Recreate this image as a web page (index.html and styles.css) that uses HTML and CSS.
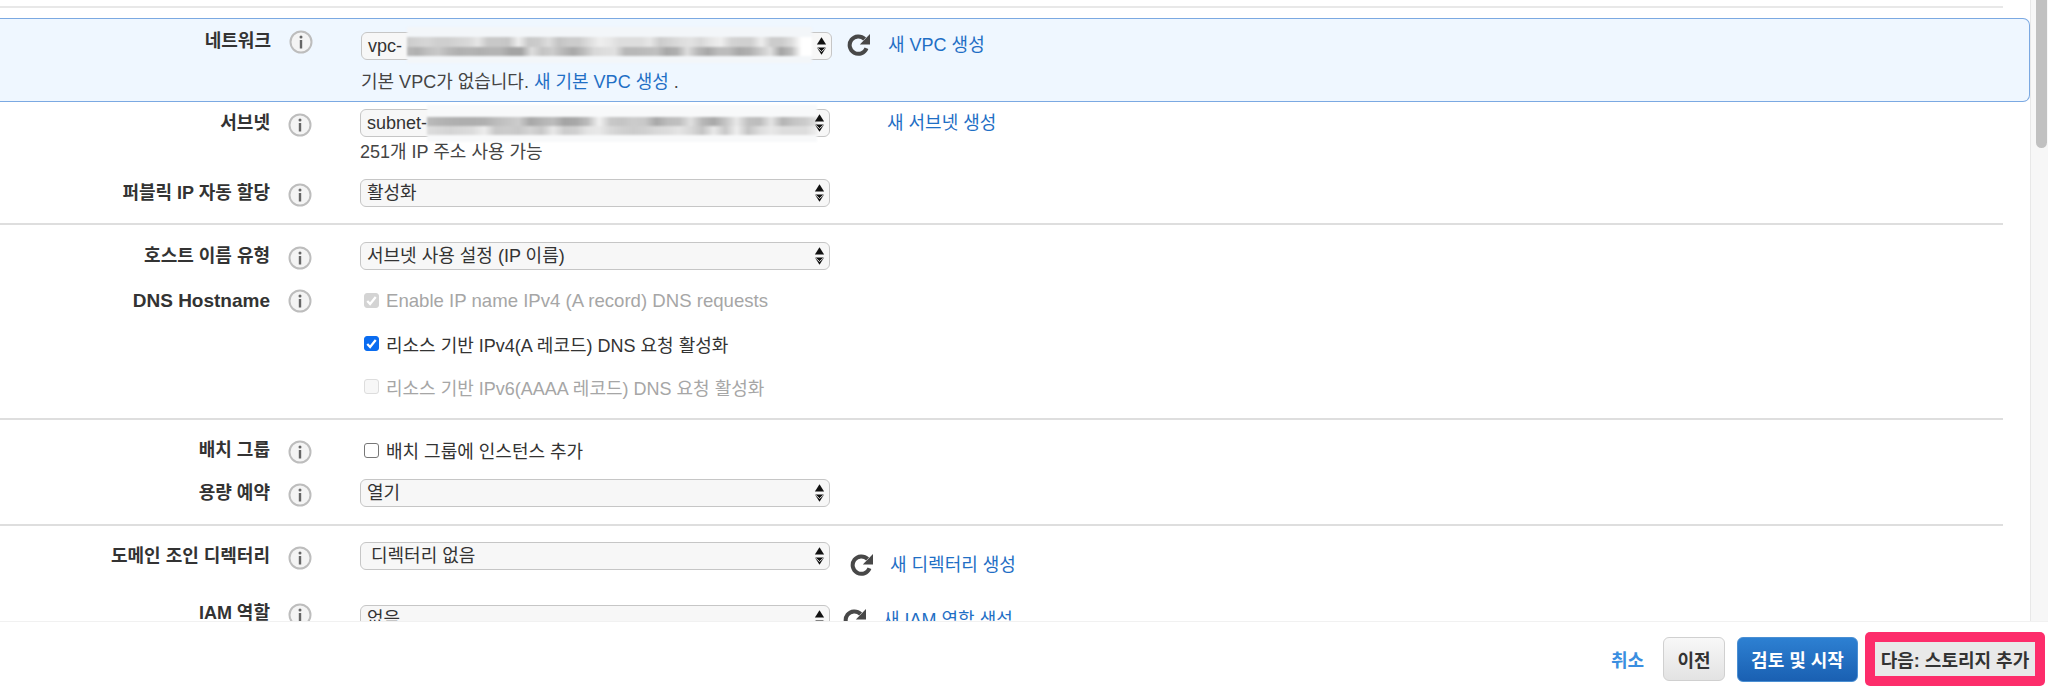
FILE: index.html
```html
<!DOCTYPE html>
<html lang="ko">
<head>
    <meta charset="UTF-8">
    <title>인스턴스 세부 정보 구성</title>
    <link rel="stylesheet" href="styles.css">
</head>
<body>

    <svg class="defs" width="0" height="0">
        <symbol id="icon-info" viewBox="0 0 24 24">
            <circle cx="12" cy="12" r="10.5" fill="#f4f4f4" stroke="#bdbdbd" stroke-width="2"/>
            <circle cx="12" cy="7" r="1.5" fill="#666"/>
            <rect x="10.8" y="10" width="2.4" height="8.5" fill="#666"/>
        </symbol>
        <symbol id="icon-refresh" viewBox="0 0 24 24">
            <path d="M19.5 15.2A8.7 8.7 0 1 1 17.6 6" fill="none" stroke="#484848" stroke-width="4"/>
            <path d="M23 1v10.4H12.8z" fill="#484848"/>
        </symbol>
        <symbol id="icon-arrows" viewBox="0 0 10 16">
            <path d="M5 0l4.2 6.6H.8z" fill="#111"/>
            <path d="M5 16L.8 9.4h8.4z" fill="#111"/>
            <path d="M1 9.4L5 13l4-3.6" fill="none" stroke="#fff" stroke-width=".8"/>
        </symbol>
        <symbol id="icon-tick" viewBox="0 0 16 16">
            <path d="M3.5 8.5l3 3.2 6-7.5" fill="none" stroke="#fff" stroke-width="2.4"/>
        </symbol>
    </svg>

    <div class="page">
        <div class="main">
            <div class="content">
                <div class="line line-top"></div>

                <div class="row row-active">
                    <div class="label">네트워크</div>
                    <div class="info"><svg><use href="#icon-info"/></svg></div>
                    <div class="field field-shift">
                        <div class="select select-wide">
                            <span>vpc-</span>
                            <div class="redact redact-vpc"></div>
                            <svg class="arrows"><use href="#icon-arrows"/></svg>
                        </div>
                        <div class="hint hint-active">기본 VPC가 없습니다. <a href="#">새 기본 VPC 생성</a> .</div>
                    </div>
                    <div class="side side-vpc">
                        <svg class="refresh"><use href="#icon-refresh"/></svg>
                        <a href="#">새 VPC 생성</a>
                    </div>
                </div>

                <div class="row row-subnet">
                    <div class="label">서브넷</div>
                    <div class="info"><svg><use href="#icon-info"/></svg></div>
                    <div class="field">
                        <div class="select">
                            <span>subnet-</span>
                            <div class="redact redact-subnet"></div>
                            <svg class="arrows"><use href="#icon-arrows"/></svg>
                        </div>
                        <div class="hint">251개 IP 주소 사용 가능</div>
                    </div>
                    <div class="side side-plain"><a href="#">새 서브넷 생성</a></div>
                </div>

                <div class="row row-public">
                    <div class="label">퍼블릭 IP 자동 할당</div>
                    <div class="info"><svg><use href="#icon-info"/></svg></div>
                    <div class="field">
                        <div class="select"><span>활성화</span><svg class="arrows"><use href="#icon-arrows"/></svg></div>
                    </div>
                </div>

                <div class="line line-a"></div>

                <div class="row row-host">
                    <div class="label">호스트 이름 유형</div>
                    <div class="info"><svg><use href="#icon-info"/></svg></div>
                    <div class="field">
                        <div class="select"><span>서브넷 사용 설정 (IP 이름)</span><svg class="arrows"><use href="#icon-arrows"/></svg></div>
                    </div>
                </div>

                <div class="row row-dns">
                    <div class="label label-latin">DNS Hostname</div>
                    <div class="info"><svg><use href="#icon-info"/></svg></div>
                    <div class="field">
                        <div class="check-line check-latin disabled">
                            <span class="check check-grey"><svg><use href="#icon-tick"/></svg></span>
                            Enable IP name IPv4 (A record) DNS requests
                        </div>
                        <div class="check-line">
                            <span class="check check-on"><svg><use href="#icon-tick"/></svg></span>
                            리소스 기반 IPv4(A 레코드) DNS 요청 활성화
                        </div>
                        <div class="check-line disabled">
                            <span class="check check-off"></span>
                            리소스 기반 IPv6(AAAA 레코드) DNS 요청 활성화
                        </div>
                    </div>
                </div>

                <div class="line line-b"></div>

                <div class="row row-placement">
                    <div class="label">배치 그룹</div>
                    <div class="info"><svg><use href="#icon-info"/></svg></div>
                    <div class="field">
                        <div class="check-line check-line-short">
                            <span class="check"></span>
                            배치 그룹에 인스턴스 추가
                        </div>
                    </div>
                </div>

                <div class="row row-capacity">
                    <div class="label">용량 예약</div>
                    <div class="info"><svg><use href="#icon-info"/></svg></div>
                    <div class="field">
                        <div class="select"><span>열기</span><svg class="arrows"><use href="#icon-arrows"/></svg></div>
                    </div>
                </div>

                <div class="line line-c"></div>

                <div class="row row-domain">
                    <div class="label">도메인 조인 디렉터리</div>
                    <div class="info"><svg><use href="#icon-info"/></svg></div>
                    <div class="field">
                        <div class="select select-pad"><span>디렉터리 없음</span><svg class="arrows"><use href="#icon-arrows"/></svg></div>
                    </div>
                    <div class="side side-domain">
                        <svg class="refresh"><use href="#icon-refresh"/></svg>
                        <a href="#">새 디렉터리 생성</a>
                    </div>
                </div>

                <div class="row row-iam">
                    <div class="label">IAM 역할</div>
                    <div class="info"><svg><use href="#icon-info"/></svg></div>
                    <div class="field field-iam">
                        <div class="select"><span>없음</span><svg class="arrows"><use href="#icon-arrows"/></svg></div>
                    </div>
                    <div class="side side-iam">
                        <svg class="refresh"><use href="#icon-refresh"/></svg>
                        <a href="#">새 IAM 역할 생성</a>
                    </div>
                </div>
            </div>

            <div class="scrollbar"><div class="thumb"></div></div>
        </div>

        <div class="footer">
            <a class="cancel" href="#">취소</a>
            <button class="btn btn-prev">이전</button>
            <button class="btn btn-primary">검토 및 시작</button>
            <div class="next-mark"><button class="btn-next">다음: 스토리지 추가</button></div>
        </div>
    </div>

</body>
</html>
```

FILE: styles.css
```css
* {
    box-sizing: border-box;
}
body {
    margin: 0;
    font-family: "Liberation Sans", "Noto Sans CJK KR", sans-serif;
    font-size: 18px;
    color: #444;
    background: #fff;
}
a {
    color: #1f6fc5;
    text-decoration: none;
}
.defs {
    position: absolute;
}
.page {
    display: flex;
    flex-direction: column;
    height: 696px;
    overflow: hidden;
}
.main {
    display: flex;
    height: 621px;
    overflow: hidden;
}
.content {
    flex: 1;
}
.scrollbar {
    width: 18px;
    padding-left: 5px;
    background: #f7f7f7;
    border-left: 1px solid #e8e8e8;
}
.thumb {
    width: 11px;
    height: 148px;
    background: #c1c1c1;
    border-radius: 0 0 6px 6px;
}

.line {
    width: 2003px;
    height: 2px;
    background: #dedede;
}
.line-top {
    margin-top: 6px;
    background: #e8e8e8;
}
.line-a { margin-top: 16px; }
.line-b { margin-top: 10px; }
.line-c { margin-top: 17px; }

.row {
    display: grid;
    grid-template-columns: 270px 90px 472px auto;
    align-items: start;
}
.row-active {
    height: 84px;
    margin-top: 10px;
    padding: 8px 0 0 1px;
    background: #eff7ff;
    border: 1px solid #7ba9e2;
    border-left: none;
    border-radius: 0 7px 7px 0;
}
.row-subnet { margin-top: 7px; }
.row-public { margin-top: 17px; }
.row-host { margin-top: 17px; }
.row-dns { margin-top: 9px; }
.row-placement { margin-top: 16px; }
.row-capacity { margin-top: 15px; }
.row-domain { margin-top: 16px; }
.row-iam { margin-top: 20px; }

.label {
    font-weight: bold;
    line-height: 28px;
    text-align: right;
    color: #333;
}
.row-dns .label {
    line-height: 43px;
}
.label-latin {
    font-size: 19px;
}
.info {
    height: 24px;
    margin: 4px 0 0 18px;
}
.info svg {
    display: block;
    width: 24px;
    height: 24px;
}
.row-active .info {
    margin-top: 3px;
}
.row-dns .info {
    margin-top: 10px;
}

.field-shift {
    padding-top: 5px;
}
.field-iam {
    padding-top: 6px;
}
.select {
    position: relative;
    display: flex;
    align-items: center;
    width: 470px;
    height: 28px;
    padding-left: 6px;
    line-height: 26px;
    color: #333;
    background: #f7f7f7;
    border: 1px solid #c6c6c6;
    border-radius: 6px;
}
.select-wide {
    width: 471px;
}
.select-pad {
    padding-left: 10px;
}
.arrows {
    position: absolute;
    top: 4px;
    right: 4px;
    width: 11px;
    height: 18px;
}
.redact {
    position: absolute;
    filter: blur(1px);
}
.redact-vpc {
    top: -6px;
    left: 45px;
    width: 405px;
    height: 36px;
    background:
        linear-gradient(90deg, #ccc, #d2d2d2, #d6d6d6, #cfcfcf, #cfcfcf, #d4d4d4, #d8d8d8, #e6e6e6, #c8c8c8, #c8c8c8, #c6c6c6, #eee, #c8c8c8, #ccc, #ddd, #c4c4c4, #ccc, #ccc, #ddd, #eee, #e8e8e8, #ddd, #ddd, #ddd, #e6e6e6, #ccc, #d4d4d4, #ddd, #e2e2e2, #d8d8d8, #e6e6e6, #eee, #d4d4d4, #d0d0d0, #d0d0d0, #ededed, #ccc, #ccc, #ddd, #fff, #fff) no-repeat 0 10px / 100% 10px,
        linear-gradient(90deg, #b8b8b8, #b0b0b0, #c0c0c0, #c8c8c8, #b8b8b8, #b0b0b0, #b4b4b4, #b0b0b0, #b4b4b4, #b4b4b4, #a4a4a4, #a4a4a4, #ddd, #c4c4c4, #ccc, #b8b8b8, #a8a8a8, #bcbcbc, #d8d8d8, #ddd, #e0e0e0, #b8b8b8, #b8b8b8, #bcbcbc, #c0c0c0, #a8a8a8, #b0b0b0, #ddd, #b8b8b8, #a8a8a8, #bcbcbc, #bcbcbc, #a8a8a8, #b0b0b0, #c8c8c8, #e0e0e0, #a4a4a4, #bcbcbc, #fff, #fff) no-repeat 0 20px / 100% 9px,
        #f3f6f9;
}
.redact-subnet {
    top: -5px;
    left: 66px;
    width: 390px;
    height: 37px;
    background:
        linear-gradient(90deg, #bbb, #b4b4b4, #b0b0b0, #aeaeae, #aeaeae, #b0b0b0, #bcbcbc, #c4c4c4, #ccc, #a8a8a8, #b4b4b4, #bcbcbc, #a4a4a4, #a8a8a8, #bcbcbc, #f2f2f2, #c8c8c8, #c4c4c4, #ccc, #c8c8c8, #a8a8a8, #bcbcbc, #c0c0c0, #e0e0e0, #b8b8b8, #a8a8a8, #c4c4c4, #e8e8e8, #c0c0c0, #bcbcbc, #e4e4e4, #b4b4b4, #c4c4c4, #ccc, #e0e0e0) no-repeat 0 12px / 100% 9px,
        linear-gradient(90deg, #ddd, #d8d8d8, #d4d4d4, #d8d8d8, #dcdcdc, #ececec, #c8c8c8, #ccc, #c8c8c8, #d4d4d4, #c8c8c8, #e8e8e8, #ccc, #d0d0d0, #e4e4e4, #e8e8e8, #d8d8d8, #d0d0d0, #ccc, #d0d0d0, #d8d8d8, #dcdcdc, #e4e4e4, #d8d8d8, #c4c4c4, #e8e8e8, #c8c8c8, #eee, #c4c4c4, #dcdcdc, #e8e8e8, #ddd, #ddd, #ddd, #eee) no-repeat 0 21px / 100% 9px,
        #f8f9fa;
}
.hint {
    margin-top: 5px;
    line-height: 20px;
}
.hint-active {
    margin-top: 12px;
}

.side {
    display: flex;
    align-items: center;
    gap: 16px;
    line-height: 28px;
    white-space: nowrap;
}
.refresh {
    width: 24px;
    height: 24px;
    flex-shrink: 0;
}
.side-vpc {
    padding: 4px 0 0 14px;
}
.side-vpc a {
    margin-left: 1px;
}
.side-plain {
    padding-left: 55px;
}
.side-domain {
    padding: 9px 0 0 18px;
}
.side-iam {
    padding: 7px 0 0 11px;
}

.check-line {
    display: flex;
    align-items: center;
    gap: 7px;
    height: 43px;
    padding-left: 4px;
    color: #333;
    white-space: nowrap;
}
.check-line-short {
    height: 28px;
}
.check-latin {
    font-size: 18.6px;
}
.check-line.disabled {
    color: #a6a6a6;
}
.check {
    width: 15px;
    height: 15px;
    background: #fff;
    border: 1px solid #777;
    border-radius: 3px;
    flex-shrink: 0;
}
.check svg {
    display: block;
    width: 15px;
    height: 15px;
    margin: -1px;
}
.check-grey {
    background: #d4d4d4;
    border-color: #d4d4d4;
}
.check-on {
    background: #0a6cf0;
    border-color: #0a6cf0;
}
.check-off {
    background: #f7f7f7;
    border-color: #ddd;
}

.footer {
    display: flex;
    align-items: center;
    justify-content: flex-end;
    height: 75px;
    padding-right: 3px;
    background: #fff;
    border-top: 1px solid #f1f1f1;
}
.cancel {
    margin-right: 19px;
    font-weight: bold;
    color: #3a8ee0;
}
.btn {
    height: 44px;
    padding: 0;
    font-family: inherit;
    font-size: 18px;
    font-weight: bold;
    border-radius: 6px;
}
.btn-prev {
    width: 62px;
    margin-right: 12px;
    color: #333;
    background: linear-gradient(#f8f8f8, #e3e3e3);
    border: 1px solid #d0d0d0;
}
.btn-primary {
    width: 121px;
    height: 45px;
    margin-right: 7px;
    color: #fff;
    background: linear-gradient(#2d80d2, #1a60b2);
    border: 1px solid #4a8fd3;
}
.next-mark {
    padding: 10px;
    background: #fd2d6b;
    border-radius: 5px;
}
.btn-next {
    display: block;
    width: 160px;
    height: 34px;
    padding: 0;
    font-family: inherit;
    font-size: 18px;
    font-weight: bold;
    color: #333;
    background: #e9e9e9;
    border: none;
}
```
